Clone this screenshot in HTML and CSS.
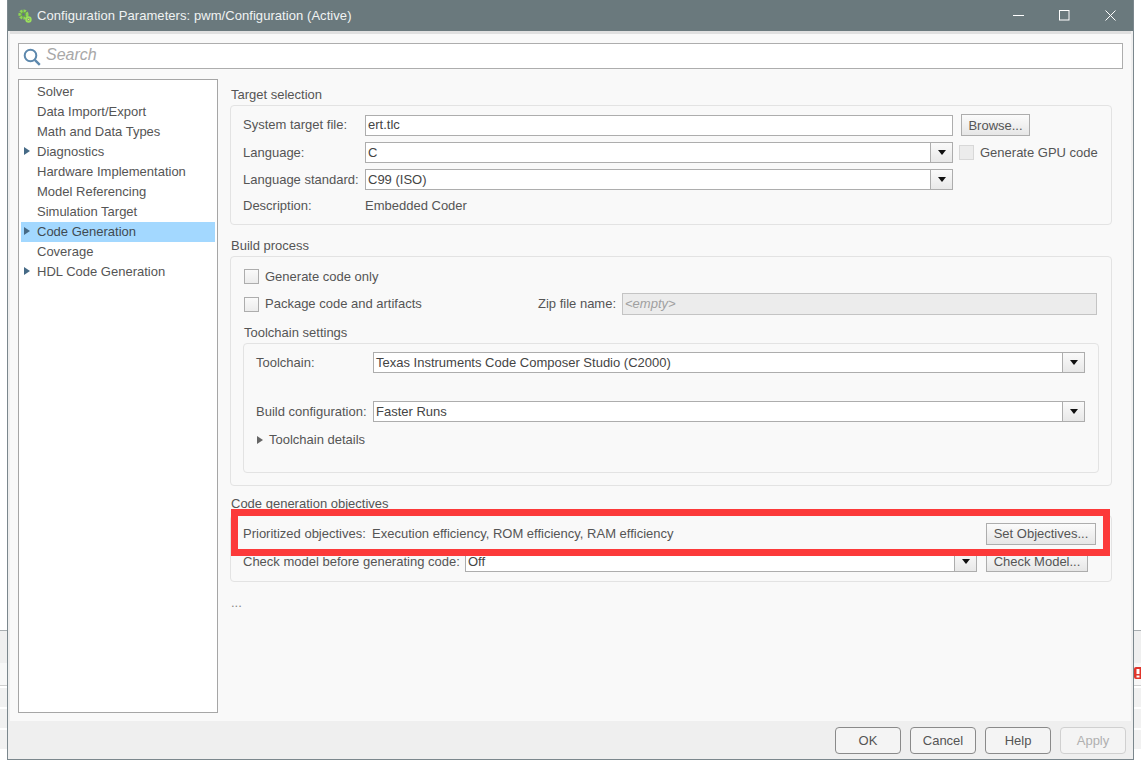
FILE: index.html
```html
<!DOCTYPE html>
<html lang="en">
<head>
<meta charset="utf-8">
<title>Configuration Parameters</title>
<link rel="stylesheet" href="styles.css">
</head>
<body>
<div class="behind">
  <div class="b b1"></div><div class="b b2"></div><div class="b b3"></div><div class="b b4"></div><div class="b b5"></div>
  <svg class="alert" width="9" height="12" viewBox="0 0 9 12"><rect x="0" y="0" width="9" height="12" rx="2" fill="#e0352b"/><rect x="2.5" y="2" width="3" height="5" fill="#fff"/><rect x="2.5" y="8.5" width="3" height="2" fill="#fff"/></svg>
</div>
<div class="window">
  <header class="titlebar">
    <svg class="appicon" width="14" height="14" viewBox="0 0 14 14"><circle cx="5.5" cy="5.5" r="3.6" fill="none" stroke="#8ed653" stroke-width="3" stroke-dasharray="2.4 0.9"/><circle cx="5.5" cy="5.5" r="2.1" fill="none" stroke="#6ab13c" stroke-width="1"/><circle cx="10.5" cy="10.5" r="2.2" fill="none" stroke="#9be05c" stroke-width="2"/><circle cx="10.5" cy="10.5" r="0.8" fill="#d8e86a"/></svg>
    <span class="title">Configuration Parameters: pwm/Configuration (Active)</span>
    <div class="winctl">
      <svg width="11" height="11" viewBox="0 0 11 11"><path d="M0 5.5h11" stroke="#fff" fill="none"/></svg>
      <svg width="11" height="11" viewBox="0 0 11 11"><rect x="0.5" y="0.5" width="9.5" height="9.5" stroke="#fff" fill="none"/></svg>
      <svg width="11" height="11" viewBox="0 0 11 11"><path d="M0.5 0.5l10 10M10.5 0.5l-10 10" stroke="#fff" fill="none"/></svg>
    </div>
  </header>
  <main class="content">
    <div class="search">
      <svg width="20" height="20" viewBox="0 0 20 20"><circle cx="8.5" cy="8.5" r="5.8" fill="none" stroke="#5d88ad" stroke-width="2"/><path d="M12.8 12.8l5 5" stroke="#5d88ad" stroke-width="2.4" fill="none"/></svg>
      <span class="search-text">Search</span>
    </div>
    <div class="columns">
      <nav class="tree">
        <div class="item">Solver</div>
        <div class="item">Data Import/Export</div>
        <div class="item">Math and Data Types</div>
        <div class="item arrow">Diagnostics</div>
        <div class="item">Hardware Implementation</div>
        <div class="item">Model Referencing</div>
        <div class="item">Simulation Target</div>
        <div class="item arrow selected">Code Generation</div>
        <div class="item">Coverage</div>
        <div class="item arrow">HDL Code Generation</div>
      </nav>
      <section class="pane">
        <h2 class="group-title t1">Target selection</h2>
        <div class="panel p1">
          <div class="row r1">
            <label class="lab w122">System target file:</label>
            <div class="field f588">ert.tlc</div>
            <button class="btn browse">Browse...</button>
          </div>
          <div class="row r2">
            <label class="lab w122">Language:</label>
            <div class="combo f588"><span class="combo-val">C</span><span class="caret"></span></div>
            <span class="check disabled"></span>
            <span class="lab gpu">Generate GPU code</span>
          </div>
          <div class="row r3">
            <label class="lab w122">Language standard:</label>
            <div class="combo f588"><span class="combo-val">C99 (ISO)</span><span class="caret"></span></div>
          </div>
          <div class="row r4">
            <label class="lab w122">Description:</label>
            <span class="lab">Embedded Coder</span>
          </div>
        </div>

        <h2 class="group-title t2">Build process</h2>
        <div class="panel p2">
          <div class="row c1"><span class="check"></span><span class="lab chk-lab">Generate code only</span></div>
          <div class="row c2">
            <span class="check"></span><span class="lab chk-lab w273">Package code and artifacts</span>
            <span class="lab w84">Zip file name:</span>
            <div class="field zip">&lt;empty&gt;</div>
          </div>
          <h3 class="sub-title">Toolchain settings</h3>
          <div class="panel inner">
            <div class="row i1">
              <label class="lab w117">Toolchain:</label>
              <div class="combo f712"><span class="combo-val">Texas Instruments Code Composer Studio (C2000)</span><span class="caret"></span></div>
            </div>
            <div class="row i2">
              <label class="lab w117">Build configuration:</label>
              <div class="combo f712"><span class="combo-val">Faster Runs</span><span class="caret"></span></div>
            </div>
            <div class="row i3"><span class="tri"></span><span class="lab">Toolchain details</span></div>
          </div>
        </div>

        <h2 class="group-title t3">Code generation objectives</h2>
        <div class="panel p3">
          <div class="row o1">
            <span class="lab w129">Prioritized objectives:</span>
            <span class="lab grow">Execution efficiency, ROM efficiency, RAM efficiency</span>
            <button class="btn setobj">Set Objectives...</button>
          </div>
          <div class="row o2">
            <span class="lab w222">Check model before generating code:</span>
            <div class="combo f512"><span class="combo-val">Off</span><span class="caret"></span></div>
            <button class="btn checkm">Check Model...</button>
          </div>
        </div>
        <div class="dots">...</div>
        <div class="highlight"></div>
      </section>
    </div>
  </main>
  <footer class="footer">
    <button class="dlg">OK</button>
    <button class="dlg">Cancel</button>
    <button class="dlg">Help</button>
    <button class="dlg off">Apply</button>
  </footer>
</div>
</body>
</html>
```
FILE: styles.css
```css
* { box-sizing: border-box; }
html, body { margin: 0; padding: 0; height: 100%; background: #fff; overflow: hidden; }
body { position: relative; font-family: "Liberation Sans", Arial, sans-serif; font-size: 13px; color: #555; }

.behind { position: absolute; left: 0; right: 0; top: 630px; }
.b { width: 100%; }
.b1 { height: 33px; background: #efefef; border-top: 1px solid #a8adb0; }
.b2 { height: 23px; background: #f7f7f7; border-bottom: 1px solid #cfcfcf; margin-bottom: 2px; }
.b3, .b4, .b5 { height: 19px; background: #f1f1f1; margin-bottom: 2px; }
.alert { position: absolute; left: 1134px; top: 37px; }

.window { position: absolute; left: 7px; top: 0; width: 1127px; height: 760px; display: flex; flex-direction: column; border: 1px solid #7b878d; border-top: 0; background: #efefef; }
.titlebar { height: 31px; background: #6a797d; display: flex; align-items: center; padding-left: 10px; color: #f0f3f3; flex: none; }
.appicon { flex: none; margin-right: 5px; }
.title { font-size: 13px; letter-spacing: 0.06px; }
.winctl { margin-left: auto; display: flex; gap: 35px; padding-right: 17px; }
.winctl svg { display: block; }

.content { flex: 1; background: #f9f9f9; margin-left: 2px; margin-right: 2px; border-top: 3px solid #e0e0e0; padding: 9px 0 8px 8px; display: flex; flex-direction: column; min-height: 0; }
.search { width: 1105px; height: 26px; border: 1px solid #adadad; background: #fff; display: flex; align-items: center; padding-left: 3px; flex: none; }
.search svg { flex: none; margin-top: 2px; }
.search-text { font-style: italic; font-size: 16px; color: #a8a8a8; margin-left: 4px; margin-top: -2px; }

.columns { display: flex; margin-top: 10px; flex: 1; min-height: 0; }
.tree { width: 200px; height: 634px; border: 1px solid #a6a6a6; background: #fff; padding: 2px; flex: none; }
.item { height: 20px; line-height: 20px; padding-left: 16px; color: #555; position: relative; white-space: nowrap; }
.item.arrow::before { content: ""; position: absolute; left: 3px; top: 5px; border-left: 6px solid #466a86; border-top: 4.5px solid transparent; border-bottom: 4.5px solid transparent; }
.item.selected { background: #a3d8ff; color: #3f4a52; }

.pane { margin-left: 12px; width: 882px; position: relative; flex: none; }
.group-title, .sub-title { margin: 0; font-size: 13px; font-weight: normal; color: #555; line-height: 16px; padding-left: 1px; }
.t1 { margin-top: 8px; }
.t2 { margin-top: 13px; }
.t3 { margin-top: 10px; }
.panel { border: 1px solid #e3e3e3; border-radius: 4px; margin-top: 2px; padding-left: 12px; }
.p1 { height: 120px; padding-top: 8px; }
.p2 { height: 230px; padding-top: 12px; }
.p3 { height: 67px; padding-top: 7px; margin-top: 3px; }

.row { display: flex; align-items: center; white-space: nowrap; }
.lab { flex: none; line-height: 16px; }
.w122 { width: 122px; }
.w117 { width: 117px; }
.w129 { width: 129px; }
.w222 { width: 222px; }
.w84 { width: 84px; }
.w273 { width: 273px; }
.grow { flex: 1; }

.r1, .r2, .r3 { height: 22px; }
.r2, .r3 { margin-top: 5px; }
.r2 .lab, .r3 .lab { margin-top: 2px; }
.r4 { margin-top: 5px; height: 22px; }

.field { height: 21px; border: 1px solid #adadad; background: #fff; line-height: 18px; padding-left: 2px; color: #444; flex: none; }
.f588 { width: 588px; }
.f712 { width: 712px; }
.f512 { width: 512px; }
.combo { height: 21px; border: 1px solid #adadad; background: #fff; display: flex; flex: none; color: #444; }
.combo-val { flex: 1; line-height: 19px; padding-left: 2px; }
.caret { width: 22px; flex: none; border-left: 1px solid #adadad; background: linear-gradient(#fafafa, #e8e8e8); position: relative; }
.caret::after { content: ""; position: absolute; left: 7px; top: 7px; border-top: 5px solid #111; border-left: 4px solid transparent; border-right: 4px solid transparent; }

.btn { font: inherit; color: #555; height: 22px; padding: 0; border: 1px solid #adadad; background: linear-gradient(#fbfbfb, #e6e6e6); flex: none; }
.browse { width: 69px; margin-left: 8px; }
.setobj { width: 110px; margin-right: 15px; padding-bottom: 2px; }
.checkm { width: 102px; margin-left: 9px; height: 21px; }

.check { width: 15px; height: 15px; border: 1px solid #adadad; background: linear-gradient(#fafafa, #ececec); flex: none; }
.check.disabled { border-color: #d8d8d8; background: #ececec; margin-left: 6px; }
.gpu { margin-left: 6px; }
.chk-lab { margin-left: 6px; }
.c1 { height: 15px; margin-left: 1px; }
.c2 { height: 22px; margin-left: 1px; margin-top: 9px; }
.zip { width: 475px; height: 22px; background: #ececec; border-color: #c4c4c4; font-style: italic; color: #a0a0a0; line-height: 20px; }
.sub-title { margin-top: 10px; padding-left: 1px; }
.inner { margin-top: 2px; margin-right: 12px; height: 130px; padding-top: 8px; }
.i1 { height: 21px; }
.i2 { height: 21px; margin-top: 28px; }
.i3 { height: 16px; margin-top: 10px; }
.tri { width: 0; height: 0; border-left: 6px solid #666; border-top: 4px solid transparent; border-bottom: 4px solid transparent; margin-right: 6px; margin-left: 1px; }

.o1 { height: 22px; }
.o2 { height: 21px; margin-top: 6px; }
.dots { margin-top: 13px; padding-left: 1px; line-height: 16px; color: #888; }

.highlight { position: absolute; left: 1px; top: 430px; width: 879px; height: 47px; border: 7px solid #fc3a3a; pointer-events: none; }

.footer { height: 38px; flex: none; display: flex; justify-content: flex-end; align-items: flex-start; gap: 9px; padding: 6px 7px 0 0; }
.dlg { font: inherit; width: 66px; height: 27px; padding: 0; color: #555; background: #f4f4f4; border: 1px solid #8a8a8a; border-radius: 4px; }
.dlg.off { color: #b0b0b0; border-color: #d0d0d0; }
```
